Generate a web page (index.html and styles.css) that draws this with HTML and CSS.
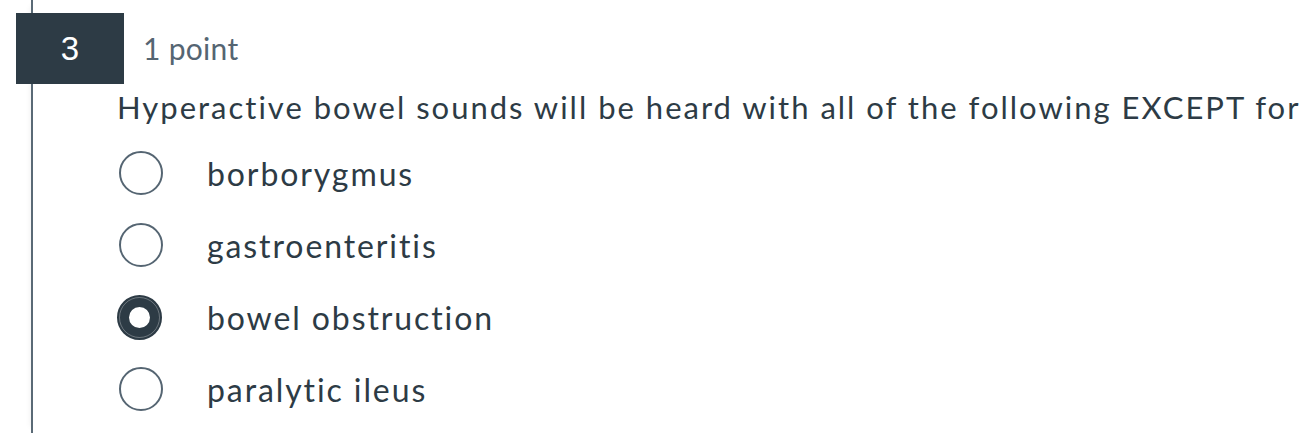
FILE: index.html
```html
<!DOCTYPE html>
<html>
<head>
<meta charset="utf-8">
<link rel="stylesheet" href="styles.css">
</head>
<body>
<div class="question">
  <div class="q-header">
    <div class="q-num">3</div>
    <div class="q-points">1 point</div>
  </div>
  <div class="q-text">Hyperactive bowel sounds will be heard with all of the following EXCEPT for</div>
  <ul class="options">
    <li class="option"><span class="radio"></span><span class="label">borborygmus</span></li>
    <li class="option"><span class="radio"></span><span class="label">gastroenteritis</span></li>
    <li class="option"><span class="radio checked"></span><span class="label">bowel obstruction</span></li>
    <li class="option"><span class="radio"></span><span class="label">paralytic ileus</span></li>
  </ul>
</div>
</body>
</html>
```
FILE: styles.css
```css
html, body {
  margin: 0;
  padding: 0;
  background: #ffffff;
}
body {
  font-family: Lato, "Open Sans", sans-serif;
  color: #2d3b45;
  overflow: hidden;
  font-variant-ligatures: none;
}
.question {
  margin-left: 31px;
  border-left: 2px solid #5a6a76;
  height: 433px;
  padding-top: 13px;
  box-sizing: border-box;
  box-shadow: -6px 0 6px -6px rgba(0,0,0,0.08);
}
.q-header {
  display: flex;
  align-items: center;
  margin-left: -17px;
}
.q-num {
  width: 108px;
  height: 71px;
  background: #2d3b45;
  color: #ffffff;
  font-family: "Liberation Sans", Arial, sans-serif;
  font-size: 33px;
  display: flex;
  align-items: center;
  justify-content: center;
}
.q-points {
  margin-left: 19px;
  font-size: 30px;
  letter-spacing: 0.3px;
  color: #556572;
  margin-top: -2px;
}
.q-text {
  margin-left: 84px;
  margin-top: 0px;
  font-size: 31px;
  letter-spacing: 2px;
  line-height: 46px;
  white-space: nowrap;
}
.options {
  list-style: none;
  margin: 7px 0 0 84px;
  padding: 0;
}
.option {
  display: flex;
  align-items: center;
  height: 72px;
}
.radio {
  width: 40px;
  height: 40px;
  border: 2px solid #556572;
  border-radius: 50%;
  box-sizing: content-box;
  flex: none;
  margin-left: 2px;
}
.radio.checked {
  width: 21px;
  height: 21px;
  border: 12px solid #2d3b45;
  background: #ffffff;
  position: relative;
  margin-left: 0;
  margin-right: 1px;
}
.radio.checked::after {
  content: "";
  position: absolute;
  inset: -10px;
  border-radius: 50%;
  border: 1px solid rgba(255,255,255,0.3);
}
.label {
  margin-left: 44px;
  font-size: 32px;
  letter-spacing: 1.9px;
}
```
